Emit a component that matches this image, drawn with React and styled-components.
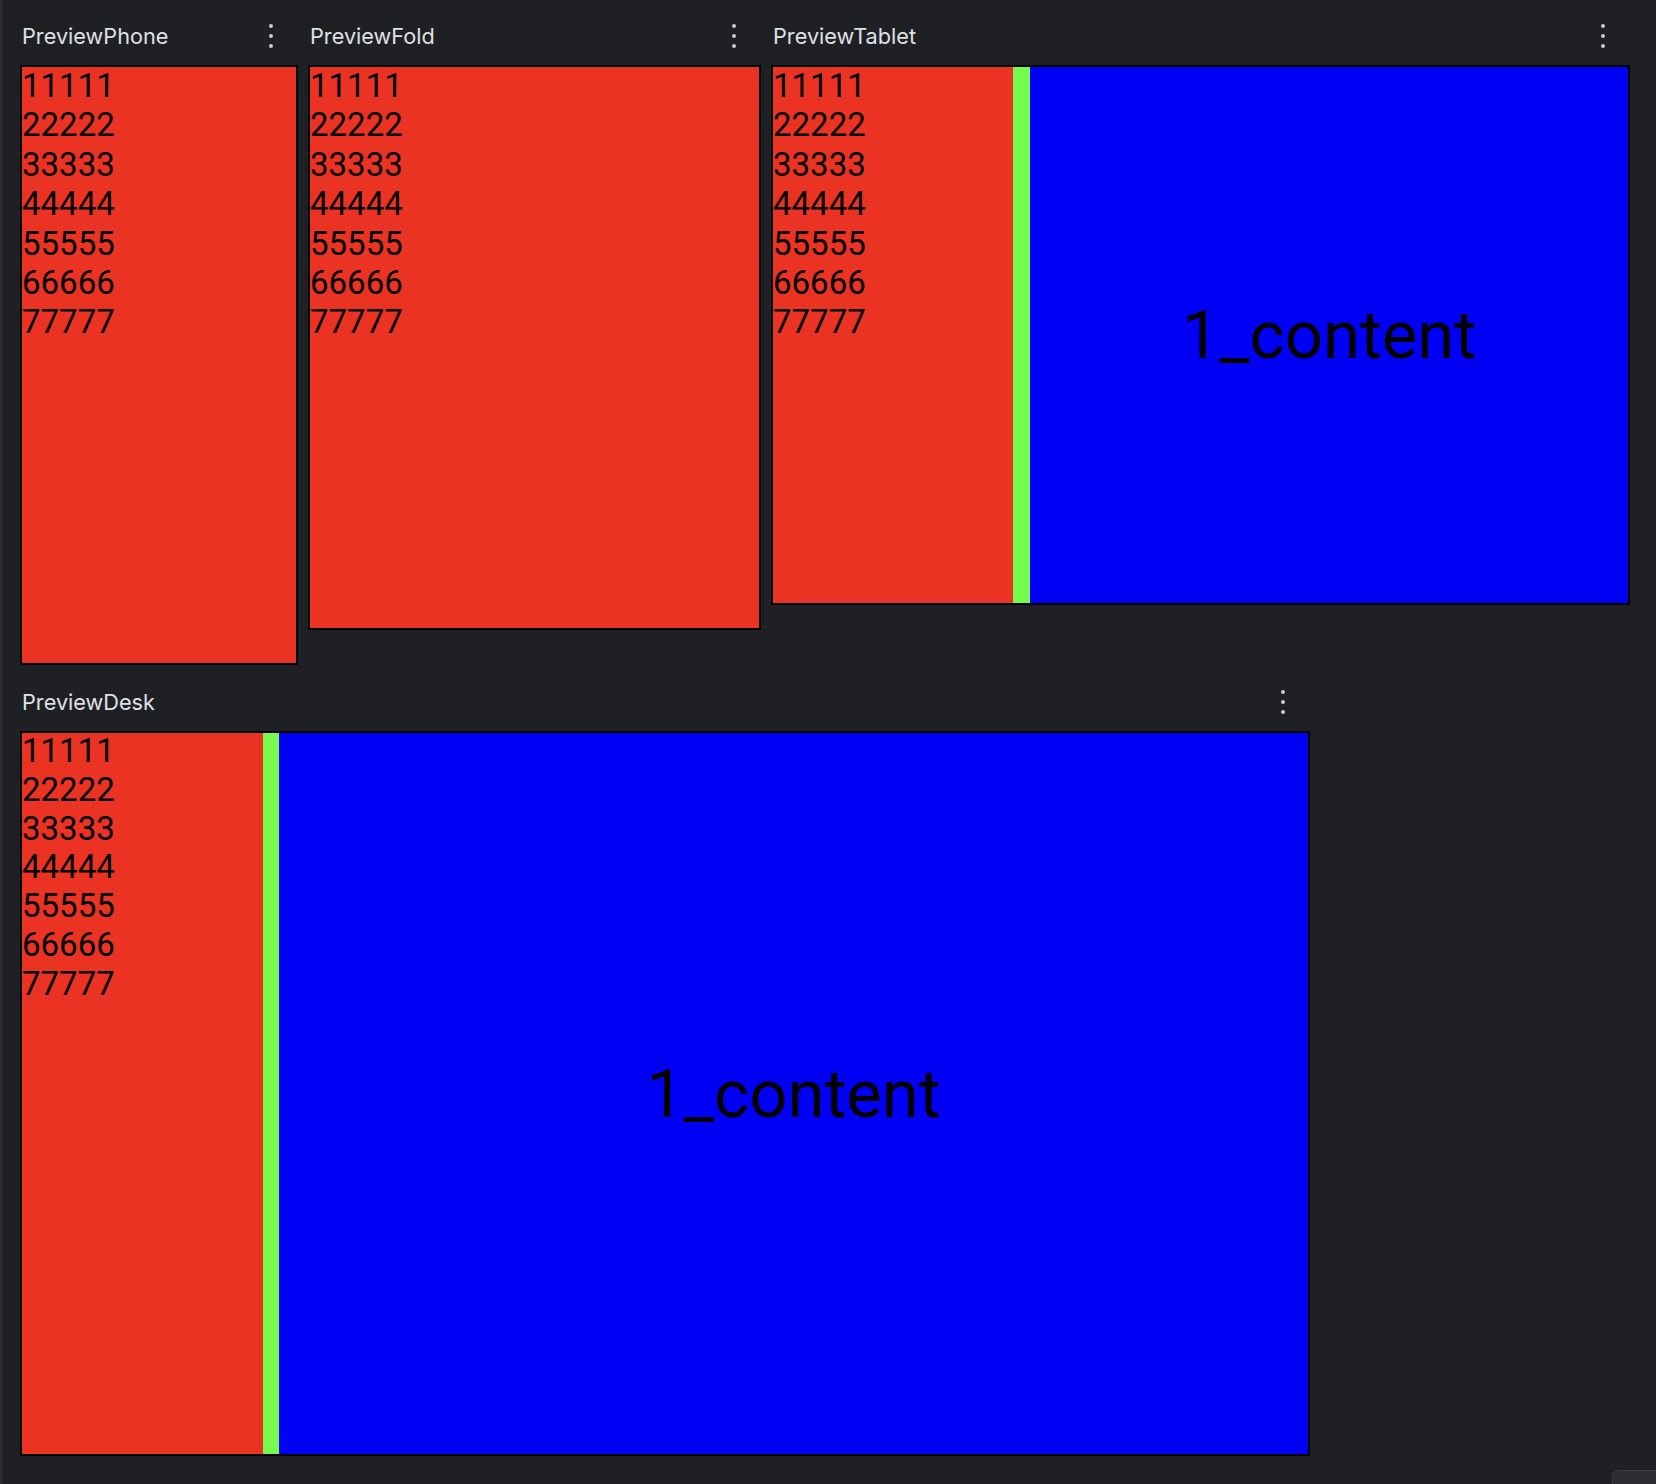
import React from "react";
import styled, { createGlobalStyle } from "styled-components";

const GlobalStyle = createGlobalStyle`
    html, body {
        margin: 0;
        padding: 0;
        background: #1f2023;
    }
    #root {
        min-height: 100vh;
    }
`;

const Page = styled.div`
    min-height: 100vh;
    box-sizing: border-box;
    background: #1f2023;
    border-left: 3px solid #2a2b2e;
    padding: 20px 0 0 17px;
    display: flex;
    flex-direction: column;
    gap: 21px;
`;

const Row = styled.div`
    display: flex;
    align-items: flex-start;
    gap: 10px;
`;

const Preview = styled.div`
    display: flex;
    flex-direction: column;
    gap: 13px;
    width: ${(p) => p.w}px;
`;

const Header = styled.div`
    height: 32px;
    display: flex;
    align-items: center;
    justify-content: space-between;
    padding: 0 25px 0 2px;
`;

const Label = styled.span`
    font-family: Inter, "Noto Sans", sans-serif;
    font-size: 21.7px;
    color: #dfe1e5;
`;

const Dots = styled.div`
    display: flex;
    flex-direction: column;
    gap: 6px;

    span {
        width: 4px;
        height: 4px;
        border-radius: 50%;
        background: #c9cbcf;
    }
`;

const Frame = styled.div`
    box-sizing: border-box;
    width: ${(p) => p.w}px;
    height: ${(p) => p.h}px;
    border: 2px solid #000;
    display: flex;
    background: #ea3323;
    overflow: hidden;
`;

const List = styled.div`
    width: ${(p) => (p.w ? `${p.w}px` : "auto")};
    flex: ${(p) => (p.w ? "none" : "1")};
    background: #ea3323;
    font-family: Roboto, "Liberation Sans", sans-serif;
    font-size: 33px;
    line-height: ${(p) => p.lh}px;
    color: #000;
    margin-top: -1px;
`;

const Divider = styled.div`
    width: ${(p) => p.w}px;
    background: #75fb4c;
`;

const Content = styled.div`
    flex: 1;
    background: #0000f5;
    display: flex;
    align-items: center;
    justify-content: center;
    font-family: Roboto, "Liberation Sans", sans-serif;
    font-size: 67px;
    color: #000;
`;

const Corner = styled.div`
    position: fixed;
    right: -10px;
    bottom: -10px;
    width: 52px;
    height: 22px;
    border-radius: 6px;
    background: #2b2d30;
    border: 1px solid #3a3c40;
`;

const items = ["11111", "22222", "33333", "44444", "55555", "66666", "77777"];

const MoreDots = () => (
    <Dots>
        <span />
        <span />
        <span />
    </Dots>
);

const Device = ({ name, w, h, split, listW, divW, lh = 39.4 }) => (
    <Preview w={w}>
        <Header>
            <Label>{name}</Label>
            <MoreDots />
        </Header>
        <Frame w={w} h={h}>
            <List w={split ? listW : 0} lh={lh}>
                {items.map((t) => (
                    <div key={t}>{t}</div>
                ))}
            </List>
            {split && (
                <>
                    <Divider w={divW} />
                    <Content>1_content</Content>
                </>
            )}
        </Frame>
    </Preview>
);

const App = () => {
    return (
        <>
            <GlobalStyle />
            <Page>
                <Row>
                    <Device name="PreviewPhone" w={278} h={600} />
                    <Device name="PreviewFold" w={453} h={565} />
                    <Device name="PreviewTablet" w={859} h={540} split listW={240} divW={17} />
                </Row>
                <Row>
                    <Device name="PreviewDesk" w={1290} h={725} split listW={241} divW={16} lh={38.8} />
                </Row>
            </Page>
            <Corner />
        </>
    );
};

export default App;
